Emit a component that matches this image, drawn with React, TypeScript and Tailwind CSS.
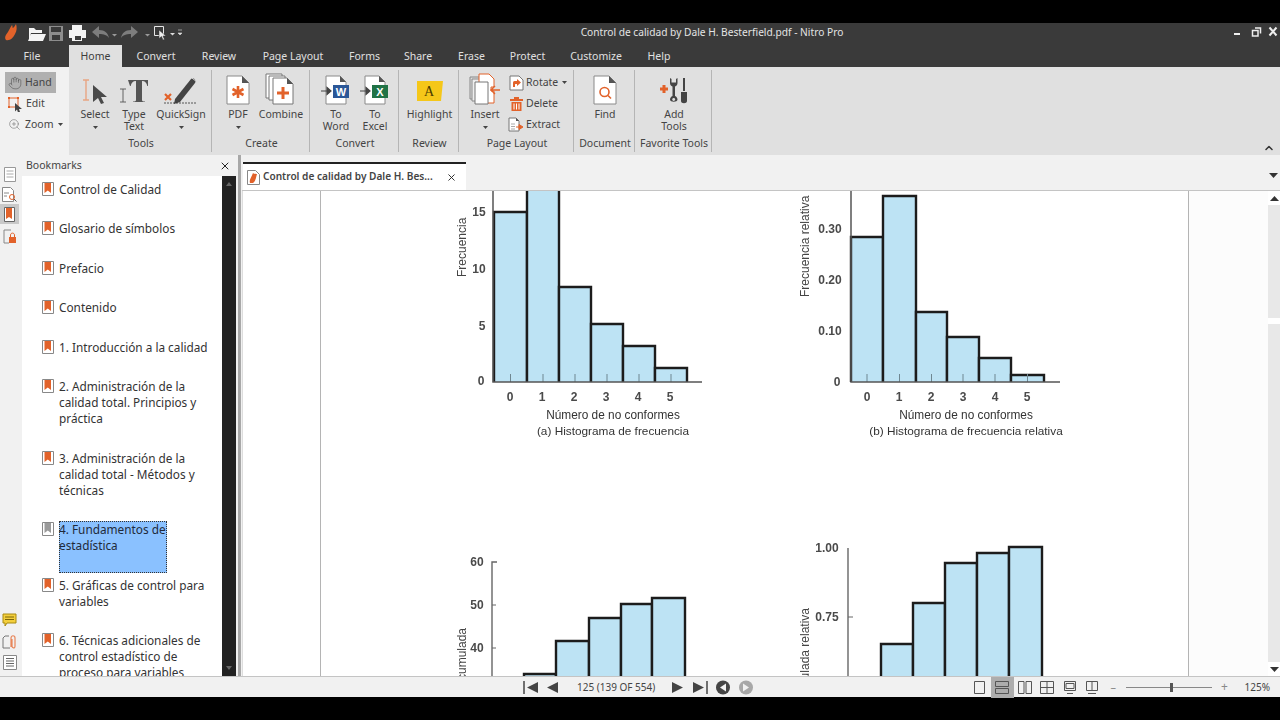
import React from "react";
import { ChevronUp, Hand, X, ZoomIn } from "lucide-react";

const orange = "#e2622a";

const tabs = [
  { label: "Convert", w: "w-[68px]" },
  { label: "Review", w: "w-[58px]" },
  { label: "Page Layout", w: "w-[90px]" },
  { label: "Forms", w: "w-[53px]" },
  { label: "Share", w: "w-[54px]" },
  { label: "Erase", w: "w-[53px]" },
  { label: "Protect", w: "w-[59px]" },
  { label: "Customize", w: "w-[78px]" },
  { label: "Help", w: "w-[48px]" },
];

const bookmarks = [
  ["Control de Calidad"],
  ["Glosario de símbolos"],
  ["Prefacio"],
  ["Contenido"],
  ["1. Introducción a la calidad"],
  ["2. Administración de la", "calidad total. Principios y", "práctica"],
  ["3. Administración de la", "calidad total - Métodos y", "técnicas"],
  ["4. Fundamentos de", "estadística"],
  ["5. Gráficas de control para", "variables"],
  ["6. Técnicas adicionales de", "control estadístico de", "proceso para variables"],
];

const Caret = ({ className = "" }: { className?: string }) => (
  <svg width="5" height="3" viewBox="0 0 5 3" className={className}>
    <path d="M0 0h5L2.5 3z" fill="#444" />
  </svg>
);

const PageShape = ({ children }: { children?: React.ReactNode }) => (
  <svg width="28" height="30" viewBox="0 0 28 30">
    <path d="M3 1h15l7 7v21H3z" fill="#fff" stroke="#8a8a8a" />
    <path d="M18 1v7h7z" fill="#555" />
    {children}
  </svg>
);

const SelectIcon = () => (
  <svg width="32" height="28" viewBox="0 0 32 28">
    <path d="M4 3h6M7 3v20M4 23h6" stroke="#e8a583" strokeWidth="1.4" fill="none" />
    <path d="M14 8l14 12h-6l3 6-3 1-3-6-5 4z" fill="#4a4a4a" />
  </svg>
);

const TypeIcon = () => (
  <svg width="32" height="28" viewBox="0 0 32 28">
    <path d="M2 12h6M5 12v13M2 25h6" stroke="#555" strokeWidth="0.900" fill="none" />
    <path d="M10 3h20v6h-.7c-.5-3-2-5-5.300-5v19c0 1 1 1.500 3 1.500V25H15v-.5c2 0 3-.5 3-1.500V4c-3.300 0-4.800 2-5.300 5H12z" fill="#555" />
  </svg>
);

const QuickSignIcon = () => (
  <svg width="36" height="30" viewBox="0 0 36 30">
    <path d="M12 24L28 4c2-2 6 1 4 4L17 27l-6 2z" fill="#444" />
    <path d="M29 3l5 4" stroke="#ddd" strokeWidth="1" />
    <path d="M2 19l6 6M8 19l-6 6" stroke={orange} strokeWidth="2.200" />
    <path d="M1 28h32" stroke="#333" strokeWidth="0.800" strokeDasharray="2 1" />
  </svg>
);

const PdfIcon = () => (
  <PageShape>
    <path d="M14 11v12M8.500 14l11 6M19.500 14l-11 6" stroke={orange} strokeWidth="2.600" />
  </PageShape>
);

const CombineIcon = () => (
  <svg width="32" height="32" viewBox="0 0 32 32">
    <path d="M1 1h16v24H1z" fill="#fff" stroke="#777" />
    <path d="M4 3h16v24H4z" fill="#fff" stroke="#777" />
    <path d="M8 5h14l6 6v20H8z" fill="#fff" stroke="#777" />
    <path d="M22 5v6h6z" fill="#555" />
    <path d="M18 14v12M12 20h12" stroke={orange} strokeWidth="3" />
  </svg>
);

const ConvertIcon = ({ color, letter }: { color: string; letter: string }) => (
  <svg width="30" height="30" viewBox="0 0 30 30">
    <path d="M5 1h14l6 6v22H5z" fill="#fff" stroke="#8a8a8a" />
    <path d="M19 1v6h6z" fill="#555" />
    <path d="M0 16h9M6 12.500l4 3.500-4 3.500z" stroke="#444" strokeWidth="1.200" fill="#444" />
    <rect x="12" y="10" width="16" height="13" fill={color} />
    <text x="20" y="20.500" textAnchor="middle" fontSize="11" fontWeight="700" fill="#fff" fontFamily="Liberation Sans, sans-serif">
      {letter}
    </text>
  </svg>
);

const HighlightIcon = () => (
  <svg width="28" height="22" viewBox="0 0 28 22">
    <path d="M1 1h26l-2 20H1z" fill="#f5c719" />
    <text x="13" y="16" textAnchor="middle" fontSize="14" fill="#4a3b00" fontFamily="Liberation Serif, serif">
      A
    </text>
  </svg>
);

const InsertIcon = () => (
  <svg width="32" height="32" viewBox="0 0 32 32">
    <path d="M1 4h14v22H1z" fill="#ddd" stroke="#888" />
    <path d="M3 6h14v22H3z" fill="#eee" stroke="#888" />
    <path d="M10 1h10l5 5v8h-3v4h3v12H10z" fill="#fff" stroke={orange} />
    <path d="M6 9h13v22H6z" fill="#fff" stroke="#777" />
    <path d="M22 17h9M26 13l-4 4 4 4" stroke={orange} strokeWidth="1.400" fill="none" />
  </svg>
);

const FindIcon = () => (
  <PageShape>
    <circle cx="13.500" cy="17" r="4.500" fill="none" stroke={orange} strokeWidth="1.600" />
    <path d="M17 20.500l3 3" stroke={orange} strokeWidth="1.600" />
  </PageShape>
);

const AddToolsIcon = () => (
  <svg width="30" height="28" viewBox="0 0 30 28">
    <path d="M1 12h8M5 8v8" stroke={orange} strokeWidth="3" />
    <path d="M11 1v5c0 2 1 3 2.500 3.500V19c-1.500.5-2.500 2-2.500 3.500 0 3 7.500 3 7.500 0 0-1.500-1-3-2.500-3.500V9.500C17.500 9 18.500 8 18.500 6V1l-1.500 1v3.500h-4.500V2z" fill="#444" />
    <circle cx="14.700" cy="22.500" r="1.400" fill="#e0e0e0" />
    <path d="M24 1h2v13h-2zM22 15h6v9c0 3-6 3-6 0z" fill="#444" />
  </svg>
);

const RotateIcon = () => (
  <svg width="15" height="16" viewBox="0 0 15 16">
    <path d="M1 1h9l4 4v10H1z" fill="#fff" stroke="#777" />
    <path d="M4 12V8c0-2 1-2 3-2h1V4l4 3.500L8 11V9H7c-1 0-1 0-1 1v2z" fill={orange} />
  </svg>
);

const DeleteIcon = () => (
  <svg width="15" height="15" viewBox="0 0 15 15">
    <path d="M1 3h13v2H1zM5 1h5v2H5z" fill={orange} />
    <path d="M2.500 6h10v9h-10z" fill={orange} />
    <path d="M5 7.500v6M7.500 7.500v6M10 7.500v6" stroke="#fff" strokeWidth="1" />
  </svg>
);

const ExtractIcon = () => (
  <svg width="16" height="15" viewBox="0 0 16 15">
    <path d="M1 1h7l3 3v10H1z" fill="#fff" stroke="#777" />
    <path d="M8 1v3h3z" fill="#555" />
    <path d="M3 7h4M3 9.500h4M3 12h4" stroke="#aaa" />
    <path d="M8 10h4M11 7.500l4 2.500-4 2.500z" stroke={orange} fill={orange} />
  </svg>
);

const EditIcon = () => (
  <svg width="16" height="16" viewBox="0 0 16 16">
    <path d="M2 2h9v9H2z" fill="none" stroke={orange} strokeWidth="1" />
    <path d="M1 1h2v2H1zM10 1h2v2h-2zM1 10h2v2H1z" fill={orange} />
    <path d="M8 7l7 6h-3l1 3-2 .500-1-3-2 2z" fill="#444" />
  </svg>
);

const BookmarkIcon = ({ grey }: { grey?: boolean }) => (
  <svg width="12" height="14" viewBox="0 0 12 14" className="shrink-0">
    <path d="M.5.5h11v13H.5z" fill="#fff" stroke="#888" />
    <path d="M2.500 1h6.500v10L5.750 8.500 2.500 11z" fill={grey ? "#9a9a9a" : orange} />
  </svg>
);

const LargeButton = ({
  w,
  icon,
  lines,
  caret,
}: {
  w: string;
  icon: React.ReactNode;
  lines: string[];
  caret?: boolean;
}) => (
  <div className={`${w} flex flex-col items-center shrink-0`}>
    <div className="h-[36px] w-full flex items-end justify-center pb-[1px]">{icon}</div>
    <div className="text-center leading-[12px] mt-[2px]">
      {lines.map((l) => (
        <div key={l}>{l}</div>
      ))}
    </div>
    {caret && <Caret className="mt-[6px]" />}
  </div>
);

const Group = ({
  w,
  label,
  center,
  children,
}: {
  w: string;
  label: string;
  center?: boolean;
  children: React.ReactNode;
}) => (
  <div className={`${w} shrink-0 flex flex-col border-r border-[#b5b5b5] my-[3px]`}>
    <div className={`h-[66px] flex ${center ? "justify-center pl-[2px]" : "pl-[6px]"}`}>{children}</div>
    <div className="text-center leading-[12px] mt-[1px] pl-[2px] whitespace-nowrap">{label}</div>
  </div>
);

const SmallButton = ({ icon, label, caret }: { icon: React.ReactNode; label: string; caret?: boolean }) => (
  <div className="h-[21px] flex items-center">
    <div className="w-[18px] flex justify-center">{icon}</div>
    <span className="ml-[1px]">{label}</span>
    {caret && <Caret className="ml-[4px]" />}
  </div>
);

const Bar = ({ x, next, top }: { x: number; next: number; top: number }) => (
  <g>
    <rect x={x} y={top} width={next - x} height={382 - top} fill="#bde3f4" />
    <path d={`M${x} 382V${top}H${next}V382`} fill="none" stroke="#1c1c1c" strokeWidth={2.4} />
    <path d={`M${(x + next) / 2} 382v-8`} stroke="#6f8791" strokeWidth="1" />
  </g>
);

const AxisNums = ({ items }: { items: [string, number, number][] }) => (
  <g fontSize="12" fontWeight="700" fill="#4a4a4a" textAnchor="middle">
    {items.map(([t, x, y]) => (
      <text key={t + x + y} x={x} y={y + 4}>
        {t}
      </text>
    ))}
  </g>
);

const PageFigures = () => (
  <svg viewBox="321 191 867 485" className="w-[867px] h-[485px] block blur-[0.35px]" fontFamily="Liberation Sans, sans-serif">
    {/* a */}
    {[[494, 527, 212], [527, 559, 170], [559, 591, 287], [591, 623, 324], [623, 655, 346], [655, 687, 368]].map(([x, n, t]) => (
      <Bar key={x} x={x} next={n} top={t} />
    ))}
    <path d="M493 191V382H702" fill="none" stroke="#555" strokeWidth="1.500" />
    <AxisNums items={[["15", 479, 212], ["10", 479, 269], ["5", 482, 326], ["0", 481, 381], ["0", 510, 397], ["1", 542, 397], ["2", 574, 397], ["3", 606, 397], ["4", 638, 397], ["5", 670, 397]]} />
    <text transform="translate(466 277) rotate(-90)" fontSize="12" fill="#444">Frecuencia</text>
    <text x="613" y="419" textAnchor="middle" fontSize="11.850" fill="#333">Número de no conformes</text>
    <text x="613" y="435" textAnchor="middle" fontSize="11.800" fill="#333">(a) Histograma de frecuencia</text>

    {/* b */}
    {[[851, 883, 237], [883, 916, 196], [916, 947, 312], [947, 979, 337], [979, 1011, 358], [1011, 1044, 375]].map(([x, n, t]) => (
      <Bar key={x} x={x} next={n} top={t} />
    ))}
    <path d="M851 191V382H1060" fill="none" stroke="#555" strokeWidth="1.500" />
    <AxisNums items={[["0.30", 830, 229], ["0.20", 830, 280], ["0.10", 830, 331], ["0", 837, 382], ["0", 867, 397], ["1", 899, 397], ["2", 931, 397], ["3", 963, 397], ["4", 995, 397], ["5", 1027, 397]]} />
    <text transform="translate(809 297) rotate(-90)" fontSize="12" fill="#444">Frecuencia relativa</text>
    <text x="966" y="419" textAnchor="middle" fontSize="11.850" fill="#333">Número de no conformes</text>
    <text x="966" y="435" textAnchor="middle" fontSize="11.800" fill="#333">(b) Histograma de frecuencia relativa</text>

    {/* c */}
    {[[524, 556, 674], [556, 589, 641], [589, 621, 618], [621, 652, 604], [652, 685, 598]].map(([x, n, t]) => (
      <path key={x} d={`M${x} 690V${t}H${n}V690`} fill="#bde3f4" stroke="#1c1c1c" strokeWidth="2.400" />
    ))}
    <path d="M497 562H492V690" fill="none" stroke="#666" strokeWidth="1.400" />
    <path d="M492 605h4M492 648h4" stroke="#666" />
    <AxisNums items={[["60", 477, 562], ["50", 477, 605], ["40", 477, 648]]} />
    <text transform="translate(466 628) rotate(-90)" textAnchor="end" fontSize="12" fill="#444">Frecuencia acumulada</text>

    {/* d */}
    {[[881, 913, 644], [913, 945, 603], [945, 977, 563], [977, 1009, 553], [1009, 1042, 547]].map(([x, n, t]) => (
      <path key={x} d={`M${x} 690V${t}H${n}V690`} fill="#bde3f4" stroke="#1c1c1c" strokeWidth="2.400" />
    ))}
    <path d="M848 548V690" fill="none" stroke="#666" strokeWidth="1.400" />
    <path d="M848 617h5" stroke="#666" />
    <AxisNums items={[["1.00", 827, 548], ["0.75", 827, 617]]} />
    <text transform="translate(809 608) rotate(-90)" textAnchor="end" fontSize="12" fill="#444">Frecuencia acumulada relativa</text>
  </svg>
);

const QuickAccess = () => (
  <svg width="180" height="22" viewBox="0 0 180 22" className="ml-[3px] shrink-0 -mt-[2px]">
    <path d="M3 18c-2-3 0-5 2-8 1-2 2-4 4-7 1 1 0 3 1 3 1-1 2-2 3-4 1 3 1 7-1 10-2 4-5 7-9 6z" fill={orange} />
    <path d="M26 6h5l2 2h6v3H28l-2 7zM28 12h15l-3 7H25z" fill="#f4f4f4" />
    <path d="M46 4h14v15H46z" fill="#8d8d8d" />
    <path d="M48 5h10v5H48zM49 13h8v5h-8z" fill="#3a3a3a" />
    <path d="M68 3h10v5h4v8h-4v3H68v-3h-3V8h3z" fill="#f2f2f2" transform="translate(1 0)" />
    <path d="M72 14h6v4h-6z" fill="#3a3a3a" />
    <path d="M89 10l7-6v4c6 0 9 3 10 8-2-3-5-4-10-4v4z" fill="#7d7d7d" />
    <path d="M109 12h5l-2.500 2.500z" fill="#999" />
    <path d="M133 10l-7-6v4c-6 0-9 3-10 8 2-3 5-4 10-4v4z" fill="#7d7d7d" transform="translate(2 0)" />
    <path d="M142 12h5l-2.500 2.500z" fill="#999" />
    <path d="M151.500 4.500h9v9h-9z" fill="none" stroke="#e6e6e6" />
    <path d="M156 8l7 6h-3l1.500 3.500-1.500.500-1.500-3.500-2.500 2z" fill="#eee" stroke="#333" strokeWidth="0.500" />
    <path d="M167 11h5l-2.500 2.500z" fill="#ddd" />
    <path d="M175 8h4M175 11h4l-2 2z" fill="#ddd" stroke="#ddd" strokeWidth="0.600" />
  </svg>
);

const RailIcon = ({ children, active }: { children: React.ReactNode; active?: boolean }) => (
  <div className={`h-[20px] w-[19px] flex items-center justify-center ${active ? "bg-[#c9c9c9]" : ""}`}>{children}</div>
);

const ViewIcon = ({ d, active }: { d: string; active?: boolean }) => (
  <div className={`h-[21px] w-[22.5px] flex items-center justify-center shrink-0 ${active ? "bg-[#adadad]" : ""}`}>
    <svg width="14" height="13" viewBox="0 0 14 13">
      <path d={d} fill="none" stroke="#555" strokeWidth="1" />
    </svg>
  </div>
);

export default function App() {
  return (
    <div
      className="w-[1280px] h-[720px] overflow-hidden flex flex-col bg-black text-[10.5px] text-[#444]"
      style={{ fontFamily: "'Noto Sans', 'Open Sans', sans-serif" }}
    >
      <div className="h-[23px] shrink-0 bg-black" />

      {/* title bar */}
      <div className="h-[22px] shrink-0 bg-[#3a3a3a] flex items-center relative">
        <QuickAccess />
        <div className="absolute left-0 right-0 top-0 h-full flex items-center justify-center text-[#e4e4e4] pl-[144px] pb-[3px] text-[10.2px]">
          Control de calidad by Dale H. Besterfield.pdf - Nitro Pro
        </div>
        <svg width="60" height="14" viewBox="0 0 60 14" className="ml-auto mr-[1px] relative -mt-[4px]">
          <path d="M15 8h6v2h-6z" fill="#eee" />
          <path d="M33.500 5.500h5.500v5.500h-5.500zM36 3h5.500v5.500" fill="none" stroke="#eee" strokeWidth="1.500" />
          <path d="M50.500 2.500l7 8M57.500 2.500l-7 8" stroke="#eee" strokeWidth="2" />
        </svg>
      </div>

      {/* menu tabs */}
      <div className="h-[22px] shrink-0 bg-[#3a3a3a] flex text-[#e0e0e0]">
        <div className="w-[64px] mr-[5px] flex items-center justify-center pt-[1px]">File</div>
        <div className="w-[53px] bg-[#e0e0e0] text-[#3c3c3c] flex items-center justify-center pt-[2px]">Home</div>
        {tabs.map((t) => (
          <div key={t.label} className={`${t.w} flex items-center justify-center pt-[2px]`}>
            {t.label}
          </div>
        ))}
      </div>

      {/* ribbon */}
      <div className="h-[88px] shrink-0 flex bg-[#e0e0e0]">
        <div className="w-[69px] shrink-0 bg-[#f1f1f1] pt-[5px] pl-[5px]">
          <div className="h-[21px] w-[51px] bg-[#b0b0b0] flex items-center pl-[3px] gap-[3px]">
            <Hand size={14} strokeWidth={1} color="#555" />
            <span>Hand</span>
          </div>
          <div className="h-[21px] flex items-center gap-[3px] pl-[2px]">
            <EditIcon />
            <span>Edit</span>
          </div>
          <div className="h-[21px] flex items-center gap-[4px] pl-[3px]">
            <ZoomIn size={13} strokeWidth={1} color="#666" />
            <span>Zoom</span>
            <Caret />
          </div>
        </div>
        <Group w="w-[143px]" label="Tools">
          <LargeButton w="w-[40px]" icon={<SelectIcon />} lines={["Select"]} caret />
          <LargeButton w="w-[38px]" icon={<TypeIcon />} lines={["Type", "Text"]} />
          <LargeButton w="w-[56px]" icon={<QuickSignIcon />} lines={["QuickSign"]} caret />
        </Group>
        <Group w="w-[98px]" label="Create">
          <LargeButton w="w-[40px]" icon={<PdfIcon />} lines={["PDF"]} caret />
          <LargeButton w="w-[46px]" icon={<CombineIcon />} lines={["Combine"]} />
        </Group>
        <Group w="w-[89px]" label="Convert">
          <LargeButton w="w-[40px]" icon={<ConvertIcon color="#2b5797" letter="W" />} lines={["To", "Word"]} />
          <LargeButton w="w-[38px]" icon={<ConvertIcon color="#217346" letter="X" />} lines={["To", "Excel"]} />
        </Group>
        <Group w="w-[60px]" label="Review" center>
          <LargeButton w="w-[50px]" icon={<div className="pb-[3px]"><HighlightIcon /></div>} lines={["Highlight"]} />
        </Group>
        <Group w="w-[115px]" label="Page Layout">
          <LargeButton w="w-[40px]" icon={<InsertIcon />} lines={["Insert"]} caret />
          <div className="ml-[2px] mt-[2px]">
            <SmallButton icon={<RotateIcon />} label="Rotate" caret />
            <SmallButton icon={<DeleteIcon />} label="Delete" />
            <SmallButton icon={<ExtractIcon />} label="Extract" />
          </div>
        </Group>
        <Group w="w-[61px]" label="Document" center>
          <LargeButton w="w-[50px]" icon={<FindIcon />} lines={["Find"]} />
        </Group>
        <Group w="w-[77px]" label="Favorite Tools" center>
          <LargeButton w="w-[50px]" icon={<AddToolsIcon />} lines={["Add", "Tools"]} />
        </Group>
        <div className="flex-1 flex items-end justify-end pr-[5px] pb-[1px]">
          <ChevronUp size={12} strokeWidth={3} color="#333" />
        </div>
      </div>

      {/* main */}
      <div className="flex-1 min-h-0 flex bg-[#f1f1f1]">
        {/* left rail */}
        <div className="w-[22px] shrink-0 flex flex-col pt-[9px]">
          <RailIcon>
            <svg width="12" height="15" viewBox="0 0 12 15">
              <path d="M.5.5h11v14H.5z" fill="#fff" stroke="#999" />
              <path d="M2.500 4h7M2.500 7h7M2.500 10h7" stroke="#aaa" />
            </svg>
          </RailIcon>
          <RailIcon>
            <svg width="15" height="15" viewBox="0 0 15 15">
              <path d="M.5.5h8l3 3v11H.5z" fill="#fff" stroke="#888" />
              <path d="M2 6h5M2 9h3" stroke="#888" />
              <circle cx="10" cy="10" r="2.500" fill="none" stroke={orange} />
              <path d="M12 12l2.500 2.500" stroke="#555" />
            </svg>
          </RailIcon>
          <RailIcon active>
            <svg width="11" height="15" viewBox="0 0 11 15">
              <path d="M.5.5h10v14H.5z" fill="#fff" stroke="#666" />
              <path d="M2 1h6v11L5 10l-3 2z" fill={orange} />
            </svg>
          </RailIcon>
          <div className="mt-[2px]">
            <RailIcon>
              <svg width="14" height="15" viewBox="0 0 14 15">
                <path d="M8 1H1v13h5" fill="none" stroke="#888" />
                <rect x="6" y="8" width="7" height="6" fill={orange} />
                <path d="M7.500 8V6c0-2.500 4-2.500 4 0v2" fill="none" stroke={orange} />
              </svg>
            </RailIcon>
          </div>
          <div className="mt-auto pb-[4px] flex flex-col gap-[1px]">
            <RailIcon>
              <svg width="15" height="14" viewBox="0 0 15 14">
                <path d="M1 1h13v9H5l-2 3v-3H1z" fill="#f4cf3c" stroke="#a98a10" />
                <path d="M3 4h9M3 6.500h9" stroke="#7d6608" />
              </svg>
            </RailIcon>
            <RailIcon>
              <svg width="15" height="15" viewBox="0 0 15 15">
                <path d="M7 2H3L1 4v10h7" fill="none" stroke="#777" />
                <path d="M9 13V4c0-3 4-3 4 0v8c0 3-3 2-3 0V5" fill="none" stroke="#e8865a" strokeWidth="1.200" />
              </svg>
            </RailIcon>
            <RailIcon>
              <svg width="14" height="15" viewBox="0 0 14 15">
                <path d="M.5.5h13v14H.5z" fill="#fff" stroke="#888" />
                <path d="M3 3.500h8M3 6h8M3 8.500h8M3 11h8" stroke="#666" />
              </svg>
            </RailIcon>
          </div>
        </div>

        {/* bookmarks panel */}
        <div className="w-[214px] shrink-0 flex flex-col">
          <div className="h-[21px] shrink-0 flex items-center justify-between pl-[4px] pr-[5px] text-[10.5px]">
            <span>Bookmarks</span>
            <X size={12} strokeWidth={2} color="#222" />
          </div>
          <div className="flex-1 min-h-0 flex">
            <div className="flex-1 min-w-0 bg-white overflow-hidden pt-[4.5px] pl-[20px] text-[11.8px] leading-[16px] text-[#333]">
              {bookmarks.map((lines, i) => {
                const selected = i === 7;
                return (
                  <div key={lines[0]} className={`flex gap-[5px] ${selected ? "h-[55.5px]" : "mb-[23.5px]"}`}>
                    <div className="pt-[1px]">
                      <BookmarkIcon grey={selected} />
                    </div>
                    <div
                      className={
                        selected
                          ? "w-[108px] h-[52px] bg-[#8ac1ff] outline-1 outline-dotted outline-[#333] -outline-offset-1 text-[#1f2a3a] whitespace-nowrap"
                          : "whitespace-nowrap"
                      }
                    >
                      {lines.map((l) => (
                        <div key={l}>{l}</div>
                      ))}
                    </div>
                  </div>
                );
              })}
            </div>
            <div className="w-[14px] shrink-0 bg-[#222222] flex flex-col items-center justify-between py-[6px]">
              <svg width="6" height="4" viewBox="0 0 6 4"><path d="M3 0l3 4H0z" fill="#666" /></svg>
              <svg width="6" height="4" viewBox="0 0 6 4"><path d="M0 0h6L3 4z" fill="#666" /></svg>
            </div>
          </div>
        </div>

        {/* splitter */}
        <div className="w-[6px] shrink-0 flex pl-[2px]">
          <div className="w-[3px] bg-[#a8a8a8]" />
        </div>

        {/* document */}
        <div className="flex-1 min-w-0 flex flex-col">
          <div className="h-[36px] shrink-0 border-b border-[#c4c4c4] flex items-end relative">
            <div className="ml-[1px] w-[223px] h-[28px] bg-white border-t-2 border-[#222] flex items-center pl-[4px] gap-[3px] text-[10.1px] font-semibold">
              <svg width="13" height="15" viewBox="0 0 13 15">
                <path d="M.5.5h8l4 4v10H.5z" fill="#fff" stroke="#888" />
                <path d="M3 13c-1-3 1-5 3-10 1 1 3 1 4 1-1 3-1 7-4 9z" fill={orange} />
              </svg>
              <span className="whitespace-nowrap">Control de calidad by Dale H. Bes...</span>
              <X size={11} strokeWidth={2} color="#222" className="ml-auto mr-[9px]" />
            </div>
            <svg width="9" height="5" viewBox="0 0 9 5" className="ml-auto mr-[2px] mb-[12px]">
              <path d="M0 0h9L4.500 5z" fill="#333" />
            </svg>
          </div>
          <div className="flex-1 min-h-0 flex bg-white">
            <div className="w-[78px] shrink-0 border-l border-[#dddddd]" />
            <div className="w-[869px] shrink-0 border-x border-[#b4b4b4] bg-white overflow-hidden">
              <PageFigures />
            </div>
            <div className="flex-1 bg-[#fcfcfc]" />
            <div className="w-[12px] shrink-0 bg-[#e8e8e8] flex flex-col">
              <div className="h-[14px] bg-white flex items-center justify-center">
                <svg width="9" height="5" viewBox="0 0 9 5"><path d="M4.500 0l4.500 5H0z" fill="#333" /></svg>
              </div>
              <div className="h-[6px] mt-[113px] bg-white" />
              <div className="mt-auto h-[14px] bg-white flex items-center justify-center">
                <svg width="9" height="5" viewBox="0 0 9 5"><path d="M0 0h9L4.500 5z" fill="#333" /></svg>
              </div>
            </div>
          </div>
        </div>
      </div>

      {/* status bar */}
      <div className="h-[21px] shrink-0 bg-[#f1f1f1] border-t border-[#c4c4c4] flex items-center relative">
        <svg width="230" height="15" viewBox="0 0 230 15" className="ml-[523px] shrink-0">
          <path d="M1 1v13" stroke="#444" strokeWidth="1.500" />
          <path d="M15 2v11L4 7.500zM35 2v11L24 7.500z" fill="#444" />
          <path d="M149 2v11l11-5.500zM170 2v11l11-5.500z" fill="#444" />
          <path d="M184 1v13" stroke="#444" strokeWidth="1.500" />
          <circle cx="200" cy="7.500" r="7" fill="#444" />
          <path d="M203 3.500v8l-6-4z" fill="#f1f1f1" />
          <circle cx="223" cy="7.500" r="7" fill="#a8a8a8" />
          <path d="M220 3.500v8l6-4z" fill="#f1f1f1" />
        </svg>
        <div className="absolute left-[577px] top-[3px] text-[10px] whitespace-nowrap text-[#444]">125 (139 OF 554)</div>
        <div className="ml-[215.500px] flex items-center">
          <ViewIcon d="M1.500.5h10v12h-10z" />
          <ViewIcon active d="M.5.5h13v5H.5zM.5 7.500h13v5H.5z" />
          <ViewIcon d="M.5.5h5.500v12H.5zM8 .5h5.500v12H8z" />
          <ViewIcon d="M.5.5h13v12H.5zM7 .5v12M.5 6.500h13" />
          <ViewIcon d="M1.500.5h11v9h-11zM3 2.500h8v5H3zM4 12.500h6" />
          <ViewIcon d="M1.500.5h11v9h-11zM7 .5v9M3 12.500h8" />
        </div>
        <span className="ml-[7px] text-[#888] text-[11px]">–</span>
        <div className="ml-[10px] w-[86px] h-[1px] bg-[#888] relative">
          <div className="absolute left-[44px] -top-[4px] w-[3px] h-[9px] bg-[#555]" />
        </div>
        <span className="ml-[9px] text-[#888] text-[12px]">+</span>
        <span className="ml-auto mr-[10px] text-[10px] text-[#444]">125%</span>
      </div>

      <div className="h-[23px] shrink-0 bg-black" />
    </div>
  );
}
